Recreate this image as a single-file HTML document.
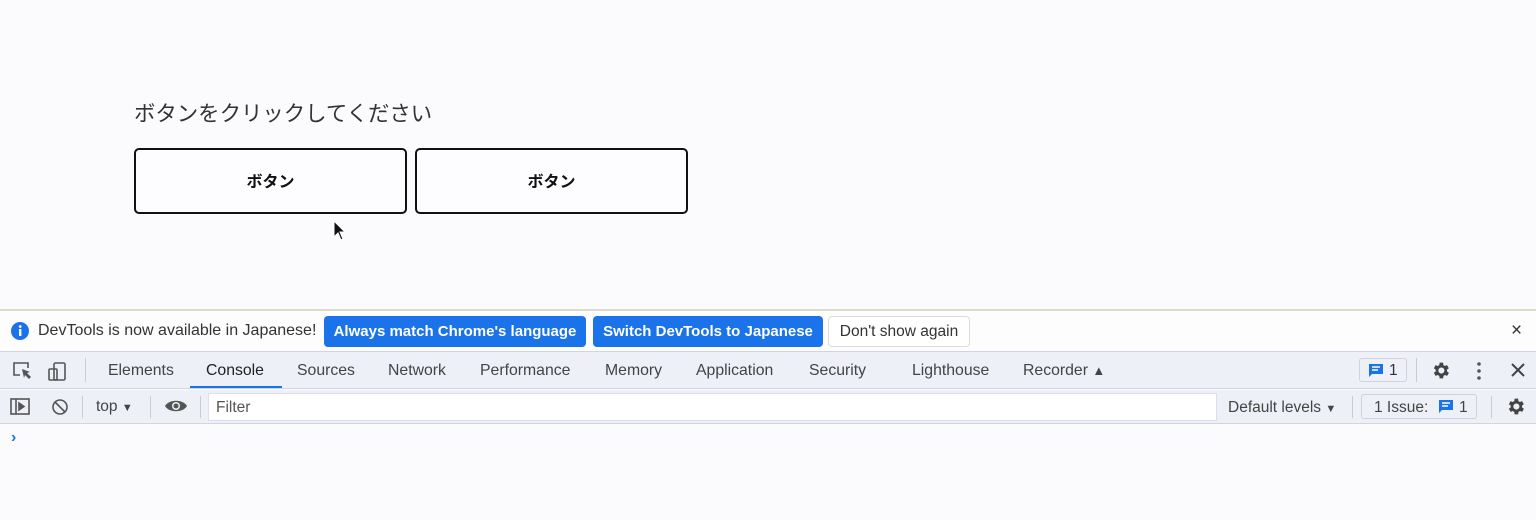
<!DOCTYPE html>
<html><head><meta charset="utf-8"><style>
*{margin:0;padding:0;box-sizing:border-box}
body{width:1536px;height:520px;background:#fbfbfe;font-family:"Liberation Sans","Noto Sans CJK JP",sans-serif;position:relative;overflow:hidden;color:#333}
.a{position:absolute;white-space:nowrap}
.btn{position:absolute;top:148px;width:273px;height:66px;border:2px solid #111;border-radius:5px;background:#fdfdff;font-weight:bold;font-size:16px;display:flex;align-items:center;justify-content:center;color:#111;padding-bottom:2px}
.tab{position:absolute;top:362px;font-size:15.8px;color:#444}
.pill{position:absolute;top:316px;height:31px;border-radius:4px;background:#1a73e8;color:#fff;font-size:15px;font-weight:bold;display:flex;align-items:center;justify-content:center}
</style></head><body>
<div class="a" style="left:134px;top:97px;font-size:21.4px;color:#333">ボタンをクリックしてください</div>
<div class="btn" style="left:134px">ボタン</div>
<div class="btn" style="left:415px">ボタン</div>
<svg class="a" style="left:332px;top:220px" width="16" height="24"><path d="M2 1 L2 17 L6 13 L9 20 L11 19 L8 12 L13 12 Z" fill="#111" stroke="#fff" stroke-width="1"/></svg>

<div class="a" style="left:0;top:309px;width:1536px;height:2px;background:#dcdcc8"></div>
<div class="a" style="left:0;top:311px;width:1536px;height:40px;background:#fdfdfd"></div>
<svg class="a" style="left:10px;top:321px" width="20" height="20"><circle cx="10" cy="10" r="9" fill="#1a73e8"/><rect x="9" y="8" width="2.4" height="7" fill="#fff"/><circle cx="10.2" cy="5.5" r="1.4" fill="#fff"/></svg>
<div class="a" style="left:38px;top:322px;font-size:16px;color:#333">DevTools is now available in Japanese!</div>
<div class="pill" style="left:324px;width:262px">Always match Chrome's language</div>
<div class="pill" style="left:593px;width:230px">Switch DevTools to Japanese</div>
<div class="a" style="left:828px;top:316px;width:142px;height:31px;border:1px solid #dadce0;border-radius:4px;background:#fff;font-size:15.5px;color:#333;display:flex;align-items:center;justify-content:center">Don't show again</div>
<div class="a" style="left:1511px;top:320px;font-size:19px;color:#333">×</div>

<div class="a" style="left:0;top:351px;width:1536px;height:38px;background:#eef0f8;border-top:1px solid #cfd3e6;border-bottom:1px solid #cfd3e6"></div>
<svg class="a" style="left:12px;top:360px" width="60" height="22" fill="none" stroke="#555" stroke-width="1.6"><path d="M8 15H2V3h14v5"/><path d="M10 9l8 3-3 1 4 4-2 2-4-4-1 3z" fill="#555" stroke="none"/><rect x="42" y="3" width="11" height="17" rx="1.5"/><rect x="37" y="9" width="8" height="11" rx="1"/></svg>
<div class="a" style="left:85px;top:358px;width:1px;height:24px;background:#ccc"></div>
<div class="tab" style="left:108px">Elements</div>
<div class="tab" style="left:206px;color:#222">Console</div>
<div class="a" style="left:190px;top:386px;width:92px;height:2px;background:#1a73e8"></div>
<div class="tab" style="left:297px">Sources</div>
<div class="tab" style="left:388px">Network</div>
<div class="tab" style="left:480px">Performance</div>
<div class="tab" style="left:605px">Memory</div>
<div class="tab" style="left:696px">Application</div>
<div class="tab" style="left:809px">Security</div>
<div class="tab" style="left:912px">Lighthouse</div>
<div class="tab" style="left:1023px">Recorder <span style="font-size:13px">▲</span></div>
<div class="a" style="left:1359px;top:358px;width:48px;height:24px;border:1px solid #d0d3dc;border-radius:3px"></div>
<svg class="a" style="left:1368px;top:362px" width="16" height="16"><path d="M1 2h14v10H4l-3 3z" fill="#1a73e8"/><path d="M4 5h8M4 8h6" stroke="#fff" stroke-width="1.4"/></svg>
<div class="a" style="left:1389px;top:362px;font-size:15.5px;color:#333">1</div>
<div class="a" style="left:1416px;top:358px;width:1px;height:24px;background:#ccc"></div>
<svg class="a" style="left:1430px;top:360px" width="21" height="21" viewBox="0 0 24 24"><path fill="#444" d="M19.4 13a7.5 7.5 0 0 0 0-2l2.1-1.6-2-3.5-2.5 1a7.6 7.6 0 0 0-1.7-1L15 3h-4l-.4 2.9a7.6 7.6 0 0 0-1.7 1l-2.5-1-2 3.5L6.6 11a7.5 7.5 0 0 0 0 2l-2.2 1.6 2 3.5 2.5-1a7.6 7.6 0 0 0 1.7 1L11 21h4l.4-2.9a7.6 7.6 0 0 0 1.7-1l2.5 1 2-3.5zM13 15.5a3.5 3.5 0 1 1 0-7 3.5 3.5 0 0 1 0 7z"/></svg>
<svg class="a" style="left:1475px;top:361px" width="8" height="20"><circle cx="4" cy="3" r="1.8" fill="#555"/><circle cx="4" cy="10" r="1.8" fill="#555"/><circle cx="4" cy="17" r="1.8" fill="#555"/></svg>
<svg class="a" style="left:1511px;top:363px" width="14" height="14"><path d="M1 1L13 13M13 1L1 13" stroke="#444" stroke-width="2"/></svg>

<div class="a" style="left:0;top:390px;width:1536px;height:34px;background:#eef0f8;border-bottom:1px solid #cfd3e6"></div>
<svg class="a" style="left:10px;top:397px" width="60" height="20" fill="none" stroke="#555" stroke-width="1.6"><rect x="1" y="2" width="18" height="15"/><path d="M6 2v15"/><path d="M9 6l5 3.5-5 3.5z" fill="#555"/><circle cx="50" cy="10" r="7"/><path d="M45 5l10 10"/></svg>
<div class="a" style="left:82px;top:396px;width:1px;height:22px;background:#ccc"></div>
<div class="a" style="left:96px;top:398px;font-size:15.5px;color:#444">top <span style="font-size:11px">▼</span></div>
<div class="a" style="left:150px;top:396px;width:1px;height:22px;background:#ccc"></div>
<svg class="a" style="left:164px;top:398px" width="24" height="16"><path d="M1 8C5 1 19 1 23 8C19 15 5 15 1 8z" fill="#555"/><circle cx="12" cy="8" r="4" fill="#eef0f8"/><circle cx="12" cy="8" r="2.5" fill="#555"/></svg>
<div class="a" style="left:200px;top:396px;width:1px;height:22px;background:#ccc"></div>
<div class="a" style="left:208px;top:393px;width:1009px;height:28px;background:#fff;border:1px solid #dde"></div>
<div class="a" style="left:216px;top:399px;font-size:15.5px;color:#555">Filter</div>
<div class="a" style="left:1228px;top:399px;font-size:15.5px;color:#444">Default levels <span style="font-size:11px">▼</span></div>
<div class="a" style="left:1352px;top:396px;width:1px;height:22px;background:#ccc"></div>
<div class="a" style="left:1361px;top:394px;width:116px;height:25px;border:1px solid #d0d3dc;border-radius:3px"></div>
<div class="a" style="left:1374px;top:399px;font-size:15.5px;color:#444">1 Issue:</div>
<svg class="a" style="left:1438px;top:398px" width="16" height="16"><path d="M1 2h14v10H4l-3 3z" fill="#1a73e8"/><path d="M4 5h8M4 8h6" stroke="#fff" stroke-width="1.4"/></svg>
<div class="a" style="left:1459px;top:399px;font-size:15.5px;color:#444">1</div>
<div class="a" style="left:1491px;top:396px;width:1px;height:22px;background:#ccc"></div>
<svg class="a" style="left:1505px;top:396px" width="21" height="21" viewBox="0 0 24 24"><path fill="#444" d="M19.4 13a7.5 7.5 0 0 0 0-2l2.1-1.6-2-3.5-2.5 1a7.6 7.6 0 0 0-1.7-1L15 3h-4l-.4 2.9a7.6 7.6 0 0 0-1.7 1l-2.5-1-2 3.5L6.6 11a7.5 7.5 0 0 0 0 2l-2.2 1.6 2 3.5 2.5-1a7.6 7.6 0 0 0 1.7 1L11 21h4l.4-2.9a7.6 7.6 0 0 0 1.7-1l2.5 1 2-3.5zM13 15.5a3.5 3.5 0 1 1 0-7 3.5 3.5 0 0 1 0 7z"/></svg>
<div class="a" style="left:11px;top:429px;font-size:16px;color:#1a73e8;font-weight:bold">›</div>
</body></html>
